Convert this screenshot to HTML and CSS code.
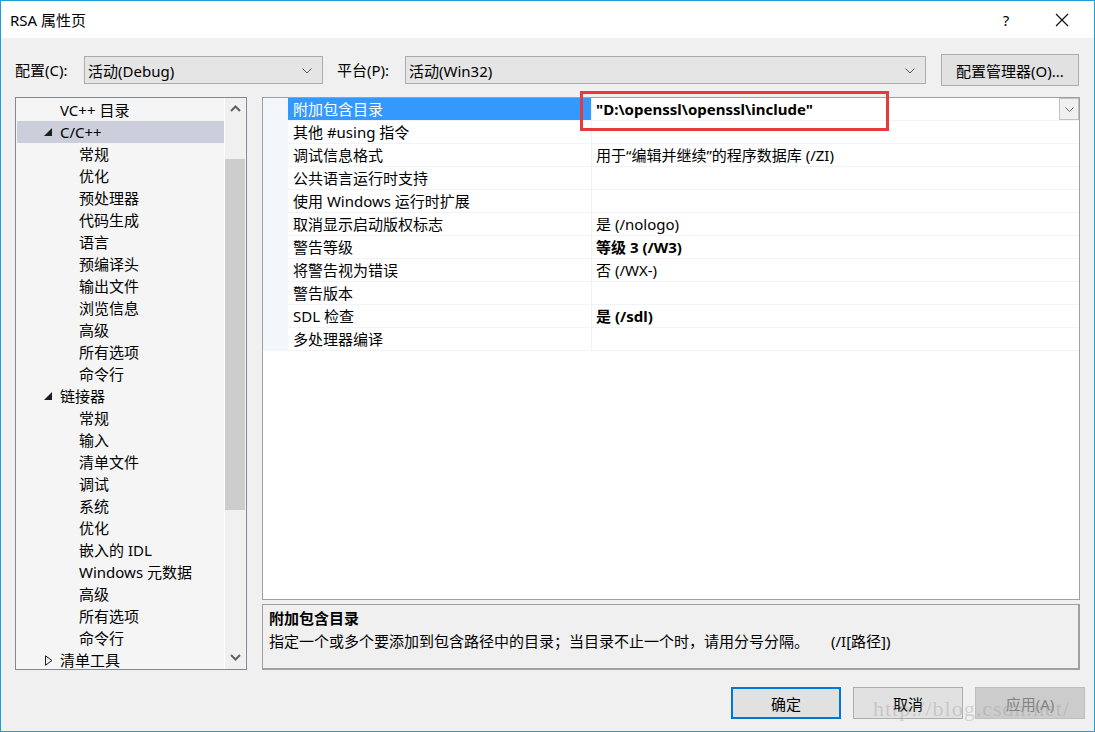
FILE: index.html
```html
<!DOCTYPE html>
<html lang="zh-CN">
<head>
<meta charset="utf-8">
<title>RSA 属性页</title>
<link rel="stylesheet" href="styles.css">
</head>
<body>
<div class="window">
  <div class="titlebar">
    <span class="title">RSA 属性页</span>
    <span class="tb-help">?</span>
    <span class="tb-close"><svg width="14" height="14" viewBox="0 0 14 14"><path d="M1 1L13 13M13 1L1 13" stroke="#111" stroke-width="1.2" fill="none"/></svg></span>
  </div>
  <div class="content">
    <div class="config-row">
      <span class="lbl lbl-config">配置(C):</span>
      <div class="select sel-config"><span>活动(Debug)</span><svg class="chev" width="10" height="6" viewBox="0 0 10 6"><path d="M0.5 0.5L5 5L9.5 0.5" stroke="#555" fill="none"/></svg></div>
      <span class="lbl lbl-platform">平台(P):</span>
      <div class="select sel-platform"><span>活动(Win32)</span><svg class="chev" width="10" height="6" viewBox="0 0 10 6"><path d="M0.5 0.5L5 5L9.5 0.5" stroke="#555" fill="none"/></svg></div>
      <div class="btn btn-mgr">配置管理器(O)...</div>
    </div>
    <div class="main">
      <div class="tree">
        <div class="tree-items">
          <div class="ti l1">VC++ 目录</div>
          <div class="ti l1 sel"><svg class="exp" width="8" height="8" viewBox="0 0 8 8"><path d="M8 0V8H0Z" fill="#1e1e1e"/></svg>C/C++</div>
          <div class="ti l2">常规</div>
          <div class="ti l2">优化</div>
          <div class="ti l2">预处理器</div>
          <div class="ti l2">代码生成</div>
          <div class="ti l2">语言</div>
          <div class="ti l2">预编译头</div>
          <div class="ti l2">输出文件</div>
          <div class="ti l2">浏览信息</div>
          <div class="ti l2">高级</div>
          <div class="ti l2">所有选项</div>
          <div class="ti l2">命令行</div>
          <div class="ti l1"><svg class="exp" width="8" height="8" viewBox="0 0 8 8"><path d="M8 0V8H0Z" fill="#1e1e1e"/></svg>链接器</div>
          <div class="ti l2">常规</div>
          <div class="ti l2">输入</div>
          <div class="ti l2">清单文件</div>
          <div class="ti l2">调试</div>
          <div class="ti l2">系统</div>
          <div class="ti l2">优化</div>
          <div class="ti l2">嵌入的 IDL</div>
          <div class="ti l2">Windows 元数据</div>
          <div class="ti l2">高级</div>
          <div class="ti l2">所有选项</div>
          <div class="ti l2">命令行</div>
          <div class="ti l1"><svg class="exp col" width="8" height="11" viewBox="0 0 8 11"><path d="M0.5 0.8L7 5.5L0.5 10.2Z" fill="none" stroke="#1e1e1e"/></svg>清单工具</div>
        </div>
        <div class="vscroll">
          <svg class="sc-up" width="11" height="7" viewBox="0 0 11 7"><path d="M1 6L5.5 1.5L10 6" stroke="#606060" stroke-width="2" fill="none"/></svg>
          <div class="sc-track"><div class="sc-thumb"></div></div>
          <svg class="sc-down" width="11" height="7" viewBox="0 0 11 7"><path d="M1 1L5.5 5.5L10 1" stroke="#606060" stroke-width="2" fill="none"/></svg>
        </div>
      </div>
      <div class="right">
        <div class="grid">
          <div class="rows">
            <div class="row sel"><div class="gm"></div><div class="name">附加包含目录</div><div class="val bold">"D:\openssl\openssl\include"<span class="ddbtn"><svg width="9" height="5" viewBox="0 0 9 5"><path d="M0.5 0.5L4.5 4.5L8.5 0.5" stroke="#666" fill="none"/></svg></span></div></div>
            <div class="row"><div class="gm"></div><div class="name">其他 #using 指令</div><div class="val"></div></div>
            <div class="row"><div class="gm"></div><div class="name">调试信息格式</div><div class="val">用于“编辑并继续”的程序数据库 (/ZI)</div></div>
            <div class="row"><div class="gm"></div><div class="name">公共语言运行时支持</div><div class="val"></div></div>
            <div class="row"><div class="gm"></div><div class="name">使用 Windows 运行时扩展</div><div class="val"></div></div>
            <div class="row"><div class="gm"></div><div class="name">取消显示启动版权标志</div><div class="val">是 (/nologo)</div></div>
            <div class="row"><div class="gm"></div><div class="name">警告等级</div><div class="val bold">等级 3 (/W3)</div></div>
            <div class="row"><div class="gm"></div><div class="name">将警告视为错误</div><div class="val">否 (/WX-)</div></div>
            <div class="row"><div class="gm"></div><div class="name">警告版本</div><div class="val"></div></div>
            <div class="row"><div class="gm"></div><div class="name">SDL 检查</div><div class="val bold">是 (/sdl)</div></div>
            <div class="row"><div class="gm"></div><div class="name">多处理器编译</div><div class="val"></div></div>
          </div>
          <div class="redbox"></div>
        </div>
        <div class="desc">
          <div class="desc-title">附加包含目录</div>
          <div class="desc-text"><span>指定一个或多个要添加到包含路径中的目录；当目录不止一个时，请用分号分隔。</span><span class="desc-sw">(/I[路径])</span></div>
        </div>
      </div>
    </div>
    <div class="buttons">
      <div class="btn btn-dlg btn-ok">确定</div>
      <div class="btn btn-dlg">取消</div>
      <div class="btn btn-dlg btn-dis">应用(A)</div>
    </div>
    <div class="watermark">http://blog.csdn.net/</div>
  </div>
</div>
</body>
</html>
```

FILE: styles.css
```css
* { box-sizing: border-box; }
html, body { margin: 0; padding: 0; }
body {
  width: 1095px;
  height: 732px;
  overflow: hidden;
  font-family: "Segoe UI", "Noto Sans", "Noto Sans CJK SC", sans-serif;
  font-size: 15px;
  color: #000;
  background: #f0f0f0;
}
.window {
  width: 1095px;
  height: 732px;
  border: 1px solid #1c9fd8;
  display: flex;
  flex-direction: column;
  background: #f0f0f0;
}
.titlebar {
  height: 37px;
  background: #fff;
  display: flex;
  align-items: center;
  padding-left: 9px;
  flex-shrink: 0;
}
.title { font-size: 15px; flex: 1; line-height: 20px; margin-top: 1px; }
.tb-help { font-size: 15px; width: 14px; margin-right: 42px; text-align: center; }
.tb-close { width: 14px; height: 14px; margin-right: 25px; display: flex; }
.content {
  flex: 1;
  position: relative;
  padding: 16px 14px 0 14px;
  display: flex;
  flex-direction: column;
}
.config-row {
  display: flex;
  align-items: center;
  height: 32px;
}
.lbl { line-height: 20px; }
.lbl-config { width: 69px; }
.lbl-platform { width: 68px; margin-left: 14px; }
.select {
  height: 28px;
  border: 1px solid #acacac;
  background: #e5e5e5;
  display: flex;
  align-items: center;
  padding: 0 10px 0 3px;
  justify-content: space-between;
}
.sel-config { width: 239px; }
.sel-platform { width: 521px; }
.chev { margin-top: 1px; }
.btn {
  border: 1px solid #adadad;
  background: #e1e1e1;
  display: flex;
  align-items: center;
  justify-content: center;
}
.btn-mgr { width: 138px; height: 32px; margin-left: 15px; }
.main {
  display: flex;
  margin-top: 11px;
  height: 573px;
  gap: 15px;
}
.tree {
  width: 232px;
  height: 573px;
  border: 1px solid #828790;
  background: #f5f5f5;
  display: flex;
  overflow: hidden;
}
.tree-items {
  width: 209px;
  padding-top: 1px;
  overflow: hidden;
}
.ti {
  height: 22px;
  line-height: 22px;
  white-space: nowrap;
  display: flex;
  align-items: center;
  margin-left: 1px;
}
.ti.l1 { padding-left: 43px; }
.ti.l2 { padding-left: 62px; }
.ti.sel { background: #cccedb; }
.exp { margin-left: -16px; margin-right: 8px; }
.exp.col { margin-left: -15px; margin-right: 7px; }
.vscroll {
  width: 21px;
  border-left: 1px solid #fff;
  background: #f0f0f0;
  display: flex;
  flex-direction: column;
  align-items: center;
  margin-right: 1px;
}
.sc-up { margin-top: 7px; flex-shrink: 0; }
.sc-track { flex: 1; width: 100%; padding-top: 47px; }
.sc-thumb { height: 351px; background: #cdcdcd; width: 100%; }
.sc-down { margin-bottom: 8px; flex-shrink: 0; }
.right {
  flex: 1;
  display: flex;
  flex-direction: column;
  gap: 4px;
}
.grid {
  height: 503px;
  border: 1px solid #a0a0a0;
  background: #fff;
  position: relative;
}
.row {
  display: flex;
  height: 23px;
  line-height: 22px;
  border-bottom: 1px solid #f0f3f8;
}
.gm { width: 25px; background: #f3f6fb; flex-shrink: 0; margin-bottom: -1px; }
.name {
  width: 304px;
  padding-left: 5px;
  border-right: 1px solid #eef1f6;
  white-space: nowrap;
  flex-shrink: 0;
}
.row.sel .name { background: #3399ff; color: #fff; }
.val {
  flex: 1;
  padding-left: 4px;
  white-space: nowrap;
  position: relative;
}
.bold { font-weight: bold; }
.ddbtn {
  position: absolute;
  right: 0;
  top: 0;
  width: 20px;
  height: 22px;
  border: 1px solid #c2c2c2;
  background: #f0f0f0;
  display: flex;
  align-items: center;
  justify-content: center;
}
.redbox {
  position: absolute;
  left: 317px;
  top: -7px;
  width: 309px;
  height: 40px;
  border: 3px solid #e8393b;
  pointer-events: none;
}
.desc {
  height: 66px;
  border: 1px solid #a0a0a0;
  border-bottom-width: 2px;
  border-right-width: 2px;
  background: #f0f0f0;
  padding: 2px 6px;
}
.desc-title { font-weight: bold; line-height: 22px; }
.desc-text { line-height: 24px; white-space: nowrap; }
.desc-sw { margin-left: 22px; }
.buttons {
  display: flex;
  justify-content: flex-end;
  gap: 12px;
  margin-top: 17px;
  margin-right: -5px;
}
.btn-dlg { width: 110px; height: 32px; }
.btn-ok { border: 2px solid #0078d7; }
.btn-dis { background: #cccccc; border-color: #bfbfbf; color: #838383; }
.watermark {
  position: absolute;
  left: 872px;
  top: 658px;
  font-family: "Liberation Serif", serif;
  font-size: 22px;
  letter-spacing: 1px;
  color: rgba(150, 150, 150, 0.35);
  pointer-events: none;
  white-space: nowrap;
}
```
